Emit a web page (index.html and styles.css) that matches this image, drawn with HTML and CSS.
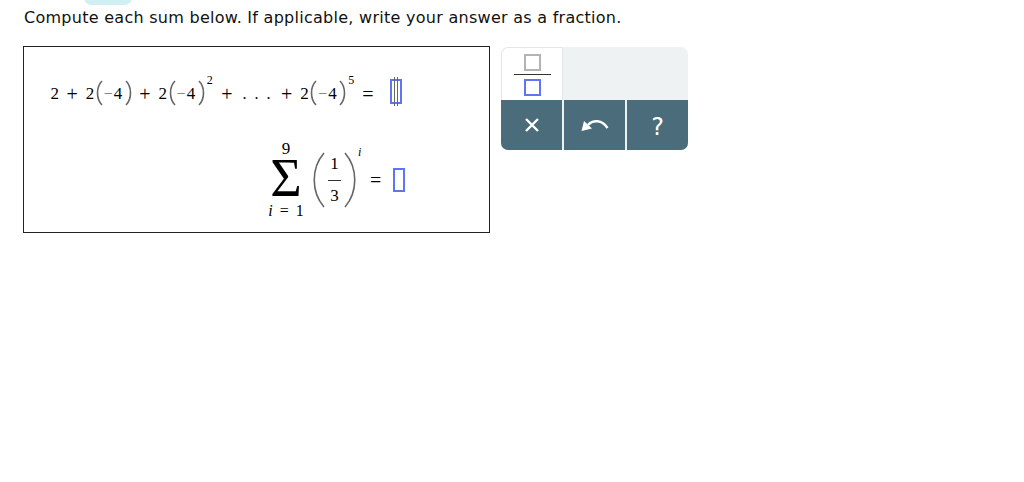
FILE: index.html
```html
<!DOCTYPE html>
<html lang="en">
<head>
<meta charset="utf-8">
<title>Compute each sum</title>
<link rel="stylesheet" href="styles.css">
</head>
<body>
<div class="tab"></div>
<p class="prompt">Compute each sum below. If applicable, write your answer as a fraction.</p>
<div class="work">
  <div class="problems">
    <div class="line first">
      <span>2</span><span class="op">+</span><span>2</span>
      <svg class="paren open" viewBox="0 0 7 26"><path d="M6 1C0 7 0 19 6 25"/></svg>
      <span class="neg">−</span><span>4</span>
      <svg class="paren close" viewBox="0 0 7 26"><path d="M1 1C7 7 7 19 1 25"/></svg>
      <span class="op">+</span><span>2</span>
      <svg class="paren open" viewBox="0 0 7 26"><path d="M6 1C0 7 0 19 6 25"/></svg>
      <span class="neg">−</span><span>4</span>
      <svg class="paren close" viewBox="0 0 7 26"><path d="M1 1C7 7 7 19 1 25"/></svg>
      <span class="sup">2</span>
      <span class="op">+</span><span class="dots">. . .</span><span class="op">+</span><span>2</span>
      <svg class="paren open" viewBox="0 0 7 26"><path d="M6 1C0 7 0 19 6 25"/></svg>
      <span class="neg">−</span><span>4</span>
      <svg class="paren close" viewBox="0 0 7 26"><path d="M1 1C7 7 7 19 1 25"/></svg>
      <span class="sup">5</span>
      <span class="eq">=</span>
      <span class="answer tall"><span class="cursor"></span></span>
    </div>
    <div class="line second">
      <div class="sigma">
        <span class="limit">9</span>
        <span class="sym">Σ</span>
        <span class="limit lower"><i>i</i> = 1</span>
      </div>
      <svg class="bigparen" viewBox="0 0 12 56"><path d="M11 1C-2 16 -2 40 11 55"/></svg>
      <div class="frac"><span>1</span><span class="bar"></span><span>3</span></div>
      <svg class="bigparen closing" viewBox="0 0 12 56"><path d="M1 1C14 16 14 40 1 55"/></svg>
      <i class="power">i</i>
      <span class="eq">=</span>
      <span class="answer"></span>
    </div>
  </div>
  <div class="palette">
    <div class="palette-top">
      <div class="frac-key">
        <span class="slot"></span>
        <span class="rule"></span>
        <span class="slot active"></span>
      </div>
    </div>
    <div class="palette-keys">
      <div class="key">
        <svg viewBox="0 0 16 14" width="16" height="14"><path class="glyph" d="M2 1L14 13M14 1L2 13"/></svg>
      </div>
      <div class="key">
        <svg viewBox="0 0 28 14" width="28" height="14"><path class="glyph" d="M7 7C12 1.500 21 1.500 26.500 10"/><path class="fill" d="M0.500 13L3 3L11 10.500Z"/></svg>
      </div>
      <div class="key help">?</div>
    </div>
  </div>
</div>
</body>
</html>
```
FILE: styles.css
```css
* { box-sizing: border-box; }
html, body { margin: 0; padding: 0; background: #fff; }
body { height: 482px; overflow: hidden; position: relative; color: #111; }

.tab {
  position: absolute;
  left: 84px;
  top: -10px;
  width: 48px;
  height: 15px;
  background: #d0eff5;
  border-radius: 8px;
}

.prompt {
  margin: 0;
  padding: 8px 0 0 24px;
  height: 46px;
  font: 16px/19px "DejaVu Sans", sans-serif;
  letter-spacing: 0.27px;
}

.work { display: flex; align-items: flex-start; padding-left: 23px; gap: 11px; }

.problems {
  width: 467px;
  height: 187px;
  border: 1px solid #222;
  padding-top: 1px;
  display: flex;
  flex-direction: column;
  font: 17px/18px "Liberation Serif", serif;
  color: #000;
}

.line { display: flex; align-items: center; }
.first { padding: 32px 0 0 26.500px; height: 59px; }
.second { padding: 0 0 0 242px; margin-top: 34px; height: 78px; }

.op { margin: 0 8px 0 7.500px; font-size: 20px; }
.neg { margin: 0 1px; color: #777; font-size: 16px; }
.dots { white-space: pre; margin: 0 1px 0 2px; letter-spacing: 2px; font-size: 16px; width: 30px; }
.sup { font-size: 12px; line-height: 12px; margin: -28px 0 0 1px; width: 8px; text-align: center; }
.eq { font-size: 20px; margin-left: 7px; }

.paren { width: 7px; height: 26px; flex: none; margin-bottom: 2px; }
.paren.open { margin-left: 1.500px; }
.paren.close { margin-left: 2.500px; }
.paren path, .bigparen path { fill: none; stroke: #666; stroke-width: 1.600; }

.answer {
  display: flex;
  justify-content: center;
  flex: none;
  width: 12px;
  height: 24px;
  margin-left: 12px;
  border: 2px solid #6174f2;
}
.answer.tall { height: 25px; margin: 0 0 5px 16px; }
.cursor { width: 4px; height: 29px; margin-top: -4px; flex: none; border: solid #666; border-width: 0 1px; }

.sigma { display: flex; flex-direction: column; align-items: center; width: 40px; flex: none; }
.limit { font-size: 17px; line-height: 16px; }
.limit.lower { white-space: pre; word-spacing: 3px; font-size: 16px; }
.sym { font-size: 54px; line-height: 46px; color: #000; margin: -2px 0 2px; }

.bigparen { width: 12px; height: 56px; margin-left: 7px; flex: none; }
.bigparen.closing { margin-left: 3px; }
.frac { display: flex; flex-direction: column; align-items: center; width: 13px; margin-left: 3px; line-height: 16px; }
.bar { width: 13px; height: 1px; background: #333; margin: 8px 0 7px; }
.power { margin: -56px 0 0 2px; font-size: 12px; width: 5px; }

.palette {
  width: 187px;
  height: 103px;
  margin-top: 1px;
  border-radius: 7px;
  overflow: hidden;
  background: #eff2f3;
  display: flex;
  flex-direction: column;
}
.palette-top { height: 53px; flex: none; }
.frac-key {
  width: 62px;
  height: 53px;
  padding-top: 6px;
  background: #fff;
  border: 1px solid #e3e7e9;
  border-bottom: 0;
  border-top-left-radius: 7px;
  display: flex;
  flex-direction: column;
  align-items: center;
}
.slot { width: 17px; height: 17px; border: 2px solid #b3b3b3; flex: none; }
.slot.active { border-color: #6174f2; }
.rule { width: 37px; height: 1px; background: #333; margin: 3px 0 4px; flex: none; }

.palette-keys { flex: 1; display: flex; gap: 2px; }
.key {
  flex: 1;
  background: #4b6d7b;
  display: flex;
  align-items: center;
  justify-content: center;
  color: #fff;
}
.glyph { fill: none; stroke: #fff; stroke-width: 2.400; }
.fill { fill: #fff; }
.help { font: 24px/1 "DejaVu Sans", sans-serif; padding-top: 3px; }
```
